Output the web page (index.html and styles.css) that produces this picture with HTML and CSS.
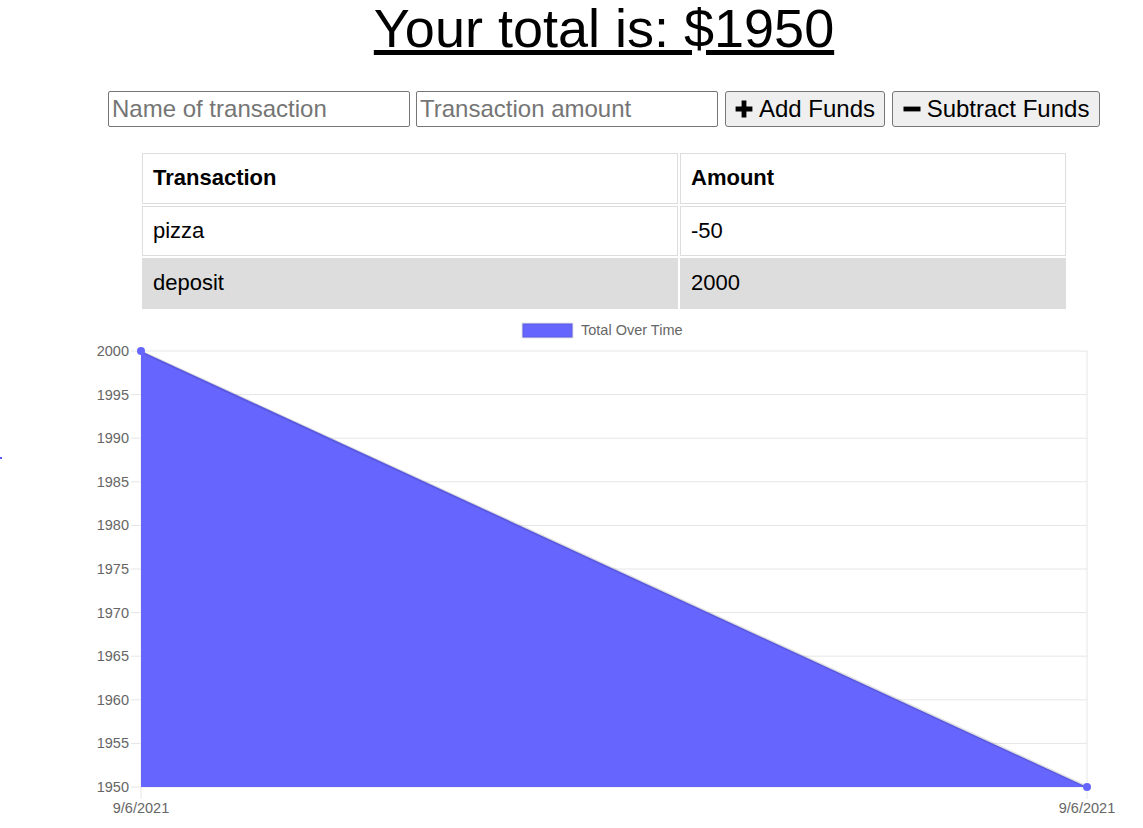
FILE: index.html
```html
<!DOCTYPE html>
<html>
<head>
<meta charset="utf-8">
<title>Budget Tracker</title>
<link rel="stylesheet" href="styles.css">
</head>
<body>
<span class="stray-dot"></span>
<div class="wrapper">
  <h1 class="total">Your total is: $1950</h1>
  <div class="form">
    <input class="field" type="text" placeholder="Name of transaction">
    <input class="field" type="number" placeholder="Transaction amount">
    <button class="btn btn-add"><svg class="ico" viewBox="0 0 18 18"><path d="M6.6 0.6h4.8v6h6v4.8h-6v6H6.6v-6h-6V6.6h6z"/></svg>Add Funds</button>
    <button class="btn btn-sub"><svg class="ico" viewBox="0 0 18 18"><rect x="0.5" y="6.6" width="17" height="4.8"/></svg>Subtract Funds</button>
  </div>
  <table class="tx">
    <thead>
      <tr><th class="c1">Transaction</th><th class="c2">Amount</th></tr>
    </thead>
    <tbody>
      <tr><td>pizza</td><td>-50</td></tr>
      <tr class="alt"><td>deposit</td><td>2000</td></tr>
    </tbody>
  </table>
</div>
<svg class="chart" width="1127" height="518" viewBox="0 0 1127 518">
  <g class="grid">
    <line x1="123" y1="40" x2="1079" y2="40"/>
    <line x1="123" y1="83.6" x2="1079" y2="83.6"/>
    <line x1="123" y1="127.2" x2="1079" y2="127.2"/>
    <line x1="123" y1="170.8" x2="1079" y2="170.8"/>
    <line x1="123" y1="214.4" x2="1079" y2="214.4"/>
    <line x1="123" y1="258" x2="1079" y2="258"/>
    <line x1="123" y1="301.6" x2="1079" y2="301.6"/>
    <line x1="123" y1="345.2" x2="1079" y2="345.2"/>
    <line x1="123" y1="388.8" x2="1079" y2="388.8"/>
    <line x1="123" y1="432.4" x2="1079" y2="432.4"/>
    <line x1="123" y1="476" x2="1079" y2="476"/>
    <line x1="133" y1="40" x2="133" y2="488"/>
    <line x1="1079" y1="40" x2="1079" y2="488"/>
  </g>
  <g class="ylab">
    <text x="121" y="45">2000</text>
    <text x="121" y="88.6">1995</text>
    <text x="121" y="132.2">1990</text>
    <text x="121" y="175.8">1985</text>
    <text x="121" y="219.4">1980</text>
    <text x="121" y="263">1975</text>
    <text x="121" y="306.6">1970</text>
    <text x="121" y="350.2">1965</text>
    <text x="121" y="393.8">1960</text>
    <text x="121" y="437.4">1955</text>
    <text x="121" y="481">1950</text>
  </g>
  <g class="xlab">
    <text x="133" y="502">9/6/2021</text>
    <text x="1079" y="502">9/6/2021</text>
  </g>
  <polygon class="area" points="133,40 1079,476 133,476"/>
  <line class="edge" x1="134" y1="41" x2="1079" y2="476"/>
  <circle class="pt" cx="133" cy="40" r="4"/>
  <circle class="pt" cx="1079" cy="476" r="4"/>
  <rect class="legend-box" x="514.5" y="12.5" width="50" height="14"/>
  <text class="legend-text" x="573" y="24">Total Over Time</text>
</svg>
</body>
</html>
```
FILE: styles.css
```css
html, body {
  margin: 0;
  padding: 0;
  background: #ffffff;
}

body {
  padding: 0 8px;
  font-family: "Liberation Sans", Arial, sans-serif;
  color: #000000;
  position: relative;
}

.stray-dot {
  position: absolute;
  left: 0;
  top: 457px;
  width: 2px;
  height: 2px;
  border-radius: 1px;
  background: #2020ff;
}

.wrapper {
  margin-left: 65px;
  display: flex;
  flex-direction: column;
  align-items: center;
}

.total {
  margin: 0;
  font-size: 54px;
  line-height: 57px;
  font-weight: normal;
  white-space: pre;
  text-decoration: underline;
  text-decoration-skip-ink: auto;
}

.form {
  margin-top: 34px;
  display: flex;
  align-items: center;
}

.field {
  box-sizing: border-box;
  width: 302px;
  height: 36px;
  margin: 0 6px 0 0;
  padding: 0 3px;
  font-family: "Liberation Sans", Arial, sans-serif;
  font-size: 24px;
  border: 1px solid #767676;
  border-radius: 2px;
  background: #ffffff;
  color: #000;
}

.field + .field {
  margin-right: 7px;
}

.field::placeholder {
  color: #757575;
}

.field::-webkit-outer-spin-button,
.field::-webkit-inner-spin-button {
  -webkit-appearance: none;
  margin: 0;
}

.btn {
  box-sizing: border-box;
  height: 36px;
  display: inline-flex;
  align-items: center;
  justify-content: center;
  gap: 6px;
  margin: 0;
  padding: 0 6px;
  white-space: nowrap;
  font-family: "Liberation Sans", Arial, sans-serif;
  font-size: 24px;
  color: #000;
  background: #efefef;
  border: 1px solid #767676;
  border-radius: 3px;
}

.btn-add {
  width: 160px;
  margin-right: 7px;
}

.btn-sub {
  width: 208px;
}

.ico {
  width: 18px;
  height: 18px;
  fill: #000;
  flex: none;
}

.tx {
  margin-top: 24px;
  width: 928px;
  border-collapse: separate;
  border-spacing: 2px;
  font-size: 22px;
}

.tx th,
.tx td {
  border: 1px solid #dddddd;
  padding: 12px 10px;
  line-height: 24.5px;
  text-align: left;
}

.tx th {
  font-weight: bold;
}

.tx .c1 {
  width: 514px;
}

.tx .alt td {
  background: #dddddd;
}

.chart {
  display: block;
  font-family: "Liberation Sans", Arial, sans-serif;
}

.grid line {
  stroke: #e6e6e6;
  stroke-width: 1;
}

.ylab text {
  font-size: 14.5px;
  fill: #666666;
  text-anchor: end;
}

.xlab text {
  font-size: 14.5px;
  fill: #666666;
  text-anchor: middle;
}

.area {
  fill: #6666ff;
}

.edge {
  stroke: rgba(0, 0, 0, 0.12);
  stroke-width: 3;
}

.pt {
  fill: #6666ff;
}

.legend-box {
  fill: #6666ff;
  stroke: rgba(0, 0, 0, 0.1);
  stroke-width: 2;
}

.legend-text {
  font-size: 14.5px;
  fill: #666666;
}
```
